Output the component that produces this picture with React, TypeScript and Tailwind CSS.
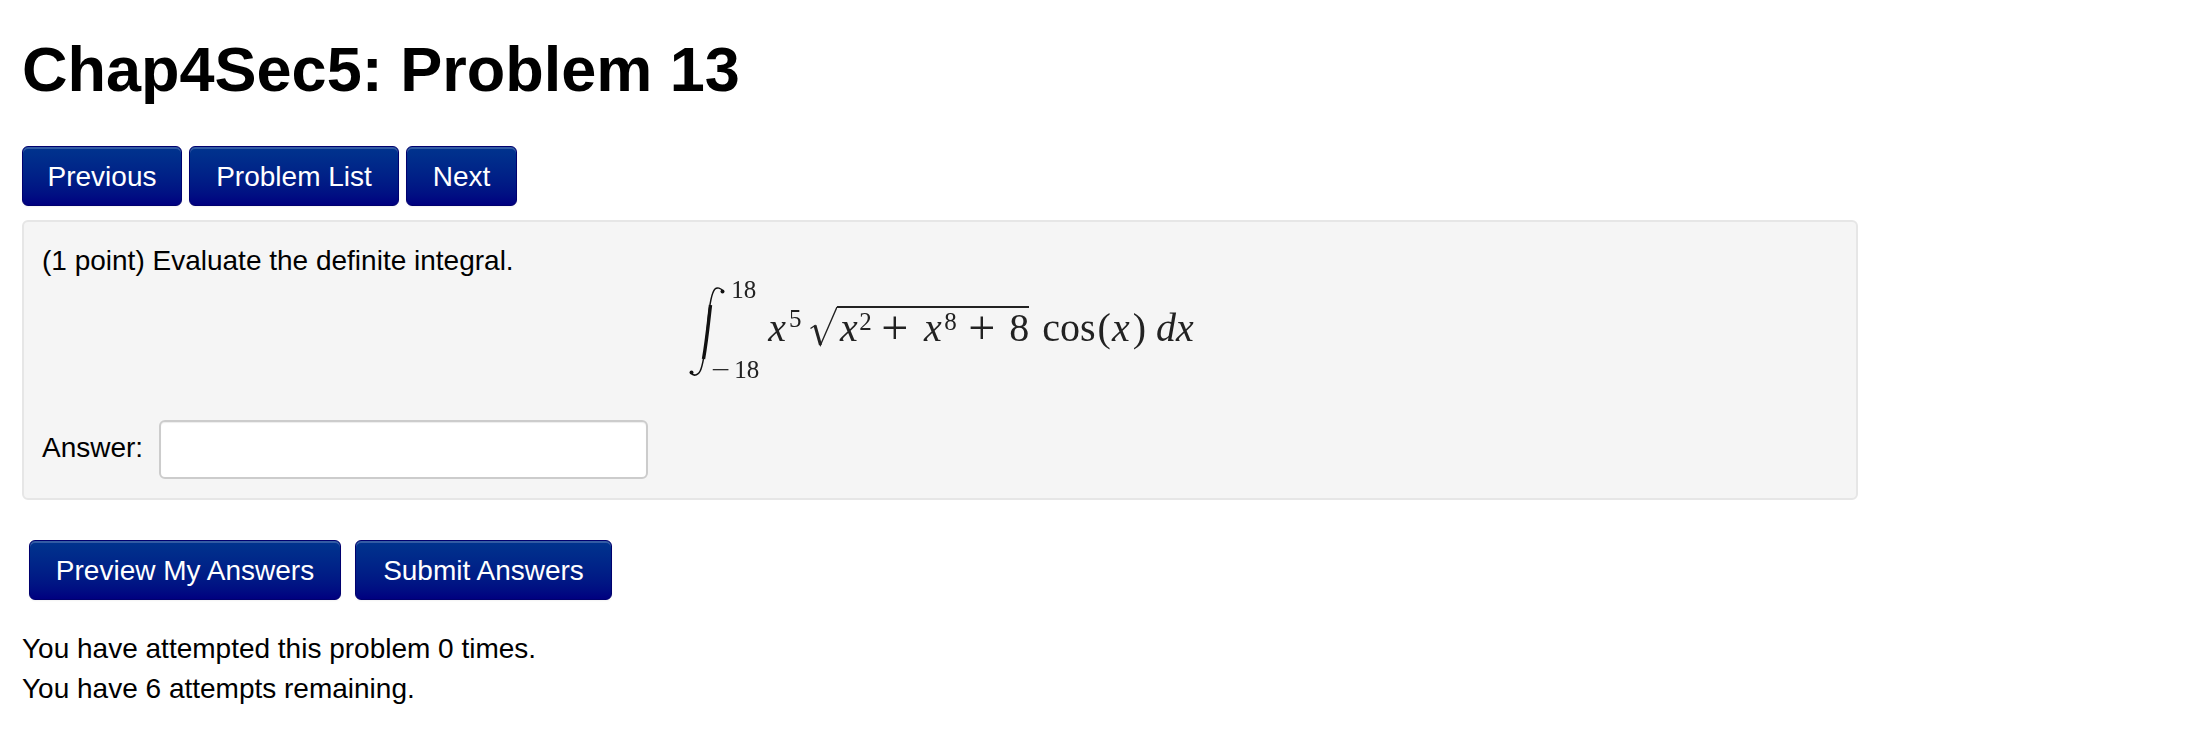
const navButton =
  'flex h-[60px] items-center justify-center rounded-[6px] border border-[#00006e] bg-gradient-to-b from-[#00348e] to-[#000080] pt-[1px] text-[28px] text-white shadow-[inset_0_2px_0_rgba(255,255,255,0.2),0_1px_2px_rgba(0,0,0,0.05)]';

function Radical() {
  return (
    <svg width="27" height="42" viewBox="0 0 27 42" className="shrink-0 text-[#222]">
      <path d="M0.5 22.5 L5 19.5 L10.5 39 L27 1" fill="none" stroke="currentColor" strokeWidth="1.4" />
      <path d="M5 19.5 L10.5 39" fill="none" stroke="currentColor" strokeWidth="3" />
    </svg>
  );
}

function Integral() {
  return (
    <svg width="36" height="90" viewBox="0 0 36 90" className="mt-[9px] shrink-0 text-[#111]">
      <path
        d="M34 4 C32 1 28 0 26 2 C22 6 20.5 18 19 34 C17.5 52 15.5 72 12 82 C10 88 5 90 2 86"
        fill="none"
        stroke="currentColor"
        strokeWidth="1.5"
      />
      <path d="M21.5 18 C20 30 18 52 14.5 72" fill="none" stroke="currentColor" strokeWidth="3.4" />
      <circle cx="33.5" cy="4.5" r="2" fill="currentColor" />
      <circle cx="2.5" cy="85.5" r="2" fill="currentColor" />
    </svg>
  );
}

function Formula() {
  return (
    <div className="flex h-[104px] items-start justify-center pl-[3px] font-['Liberation_Serif',serif] text-[#222] blur-[0.6px]">
      <Integral />
      <div className="ml-[-14px] flex h-[104px] w-[57px] flex-col justify-between text-[25px] leading-[24px]">
        <span className="ml-[20px]">18</span>
        <span className="flex">
          <span className="w-[23px] origin-left scale-x-[1.35]">−</span>
          <span>18</span>
        </span>
      </div>
      <div className="mt-[28px] flex items-start text-[40px] leading-[40px]">
        <i className="mt-[2px]">x</i>
        <span className="ml-[3px] mt-[1px] text-[25px] leading-[24px]">5</span>
        <div className="ml-[8.5px] flex items-start">
          <Radical />
          <div className="flex border-t-2 border-[#222] pl-[3px]">
            <i>x</i>
            <span className="ml-[1.5px] mt-[2px] text-[25px] leading-[24px]">2</span>
            <span className="ml-[9.5px] text-[48px]">+</span>
            <i className="ml-[15.5px]">x</i>
            <span className="ml-[2.5px] mt-[2px] text-[25px] leading-[24px]">8</span>
            <span className="ml-[11.5px] text-[48px]">+</span>
            <span className="ml-[14px]">8</span>
          </div>
        </div>
        <span className="ml-[13px] mt-[2px]">
          cos<span className="ml-[2px]">(</span>
          <i className="ml-[1px]">x</i>
          <span className="ml-[3px]">)</span>
        </span>
        <i className="ml-[10px] mt-[2px]">dx</i>
      </div>
    </div>
  );
}

export default function App() {
  return (
    <div className="min-h-[747px] bg-white pl-[22px] font-['Liberation_Sans',Arial,sans-serif] text-black">
      <h1 className="h-[146px] pt-[34px] text-[63px] font-bold leading-[70px] text-black">
        Chap4Sec5: Problem 13
      </h1>

      <div className="flex gap-[7px]">
        <button className={`${navButton} w-[160px]`}>Previous</button>
        <button className={`${navButton} w-[210px]`}>Problem List</button>
        <button className={`${navButton} w-[111px]`}>Next</button>
      </div>

      <div className="mt-[14px] h-[280px] w-[1836px] rounded-[6px] border-2 border-[#e6e6e6] bg-[#f5f5f5] px-[18px] pt-[19px]">
        <p className="text-[28px] leading-[40px]">(1 point) Evaluate the definite integral.</p>
        <div className="mt-[-3px]">
          <Formula />
        </div>
        <div className="mt-[38px] flex items-center">
          <label className="pb-[4px] text-[28px] leading-[40px]">Answer:</label>
          <input
            type="text"
            aria-label="Answer"
            className="ml-[16px] h-[59px] w-[489px] rounded-[6px] border-2 border-[#cccccc] bg-white shadow-[inset_0_1px_1px_rgba(0,0,0,0.075)]"
          />
        </div>
      </div>

      <div className="ml-[7px] mt-[40px] flex gap-[14px]">
        <button className={`${navButton} w-[312px]`}>Preview My Answers</button>
        <button className={`${navButton} w-[257px]`}>Submit Answers</button>
      </div>

      <div className="mt-[29px] text-[28px] leading-[40px]">
        <p>You have attempted this problem 0 times.</p>
        <p>You have 6 attempts remaining.</p>
      </div>
    </div>
  );
}
